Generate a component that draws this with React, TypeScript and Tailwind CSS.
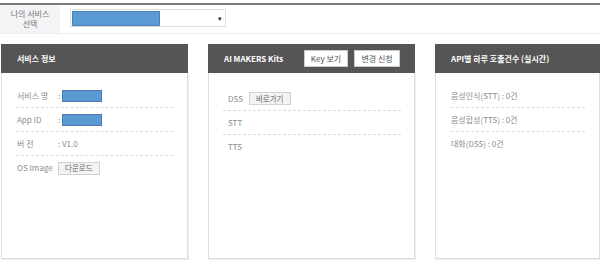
import React from 'react'

const font = { fontFamily: '"Noto Sans CJK KR", "Noto Sans", sans-serif' }

function Blank() {
  return <span className="inline-block w-[40px] h-[12px] bg-[#5b9bd5] border border-[#4a7fb5]" />
}

function SmallButton({ children }: { children: React.ReactNode }) {
  return (
    <span className="inline-flex items-center justify-center h-[13px] px-[6px] bg-[#f3f3f3] border border-[#d2d2d2] text-[7.5px] text-[#666] leading-none">
      {children}
    </span>
  )
}

function Row({ children, last = false, className = '' }: { children: React.ReactNode; last?: boolean; className?: string }) {
  return (
    <div
      className={`flex items-center h-[24px] text-[8px] text-[#8c8c8c] ${last ? '' : 'border-b border-dashed border-[#ddd]'} ${className}`}
    >
      {children}
    </div>
  )
}

function Panel({ title, width, right, children }: { title: string; width: string; right?: React.ReactNode; children: React.ReactNode }) {
  return (
    <div className={`${width} flex flex-col h-[215px]`}>
      <div className="h-[29px] bg-[#555] flex items-center justify-between px-[16px] shrink-0">
        <span className="text-white text-[8px] font-bold">{title}</span>
        {right}
      </div>
      <div className="flex-1 bg-white border-x border-b border-[#ddd] shadow-[1px_1px_0_#eee]">{children}</div>
    </div>
  )
}

export default function App() {
  return (
    <div className="w-[600px] h-[265px] bg-white pt-[3px]" style={font}>
      {/* 서비스 선택 */}
      <div className="border-t-2 border-[#7a7a7a]">
        <div className="flex h-[29px] border-b border-[#eee]">
          <div className="w-[60px] bg-[#f4f4f6] flex items-center justify-center text-center text-[8px] leading-[10px] text-[#777]">
            나의 서비스
            <br />
            선택
          </div>
          <div className="ml-[10px] mt-[4px] w-[156px] h-[18px] border border-[#ddd] bg-white flex items-center pl-[1px] pr-[3px]">
            <span className="w-[88px] h-[15px] bg-[#5b9bd5] border border-[#4a7fb5]" />
            <span className="ml-auto text-[7px] text-[#222] leading-none">▾</span>
          </div>
        </div>
      </div>

      <div className="flex gap-[20px] mt-[10px] pl-[1px]">
        {/* 서비스 정보 */}
        <Panel title="서비스 정보" width="w-[187px]">
          <div className="pt-[11px] px-[14px]">
            <Row>
              <span className="w-[42px] shrink-0 whitespace-nowrap pl-[1px]">서비스 명</span>
              <span className="mr-[2px]">:</span>
              <Blank />
            </Row>
            <Row>
              <span className="w-[42px] shrink-0 whitespace-nowrap pl-[1px]">App ID</span>
              <span className="mr-[2px]">:</span>
              <Blank />
            </Row>
            <Row>
              <span className="w-[42px] shrink-0 whitespace-nowrap pl-[1px]">버 전</span>
              <span>: V1.0</span>
            </Row>
            <Row last>
              <span className="w-[42px] shrink-0 whitespace-nowrap pl-[1px]">OS Image</span>
              <SmallButton>다운로드</SmallButton>
            </Row>
          </div>
        </Panel>

        {/* AI MAKERS Kits */}
        <Panel
          title="AI MAKERS Kits"
          width="w-[207px]"
          right={
            <div className="flex gap-[6px] -mr-[1px]">
              <span className="w-[44px] h-[17px] bg-white border border-[#ccc] flex items-center justify-center text-[8px] text-[#555]">Key 보기</span>
              <span className="w-[46px] h-[17px] bg-white border border-[#ccc] flex items-center justify-center text-[8px] text-[#555]">변경 신청</span>
            </div>
          }
        >
          <div className="pt-[14px] pl-[14px] pr-[13px]">
            <Row className="pl-[5px] gap-[6px]">
              <span>DSS</span>
              <SmallButton>바로가기</SmallButton>
            </Row>
            <Row className="pl-[5px]">STT</Row>
            <Row className="pl-[5px]" last>
              TTS
            </Row>
          </div>
        </Panel>

        {/* API별 호출건수 */}
        <Panel title="API별 하루 호출건수 (실시간)" width="w-[165px]">
          <div className="pt-[11px] pl-[15px] pr-[14px]">
            <Row>음성인식(STT) : 0건</Row>
            <Row>음성합성(TTS) : 0건</Row>
            <Row last>대화(DSS) : 0건</Row>
          </div>
        </Panel>
      </div>
    </div>
  )
}
